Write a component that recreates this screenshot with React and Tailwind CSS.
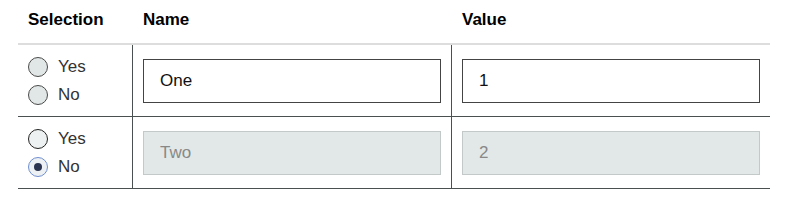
import React from "react";

function Radio({ checked, dark }) {
  return (
    <span
      className={
        "flex h-[20px] w-[20px] shrink-0 items-center justify-center rounded-full border-[1.5px] " +
        (checked
          ? "border-[#6f8fd0] bg-[#eef1f4]"
          : dark
          ? "border-[#222] bg-[#eef1f1]"
          : "border-[#4a4a4a] bg-[#e1e7e6]")
      }
    >
      {checked && <span className="h-[8px] w-[8px] rounded-full bg-[#2c3550]" />}
    </span>
  );
}

function RadioLine({ label, checked, dark }) {
  return (
    <label className="flex h-[28px] items-center gap-[10px] pl-[10px] text-[17px] text-[#333]">
      <Radio checked={checked} dark={dark} />
      <span>{label}</span>
    </label>
  );
}

function Field({ value, disabled }) {
  return (
    <div
      className={
        "flex h-[44px] items-center border pl-[16px] text-[17px] " +
        (disabled
          ? "border-[#c3c8c8] bg-[#e1e8e7] text-[#888]"
          : "border-[#444] bg-white text-[#111]")
      }
    >
      {value}
    </div>
  );
}

function Row({ name, value, disabled, second }) {
  return (
    <div className="grid h-[72px] grid-cols-[115px_319px_318px] border-b border-[#4a4f4f]">
      <div className="flex flex-col justify-center border-r border-[#4a4f4f]">
        <RadioLine label="Yes" dark={second} />
        <RadioLine label="No" checked={second} />
      </div>
      <div className="flex flex-col justify-center border-r border-[#4a4f4f] px-[10px]">
        <Field value={name} disabled={disabled} />
      </div>
      <div className="flex flex-col justify-center px-[10px]">
        <Field value={value} disabled={disabled} />
      </div>
    </div>
  );
}

export default function App() {
  return (
    <div
      className="h-[207px] w-[785px] bg-white pl-[18px]"
      style={{ fontFamily: '"Liberation Sans", Arial, sans-serif' }}
    >
      <div className="w-[752px]">
        <div className="grid h-[45px] grid-cols-[115px_319px_318px] items-center border-b-2 border-[#dddddd] text-[17px] font-bold text-black">
          <div className="pl-[10px] pb-[4px]">Selection</div>
          <div className="pl-[10px] pb-[4px]">Name</div>
          <div className="pl-[10px] pb-[4px]">Value</div>
        </div>
        <Row name="One" value="1" />
        <Row name="Two" value="2" disabled second />
      </div>
    </div>
  );
}
